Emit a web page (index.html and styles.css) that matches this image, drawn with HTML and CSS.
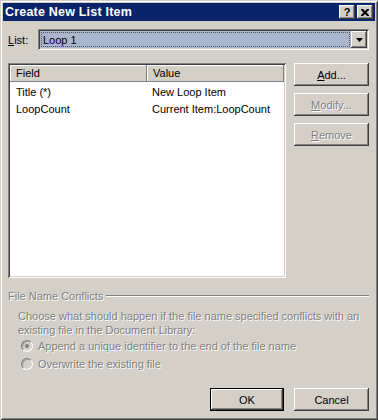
FILE: index.html
```html
<!DOCTYPE html>
<html>

<head>
    <title>Create New List Item</title>
    <link rel="stylesheet" href="styles.css">
</head>

<body>
    <div class="window">
        <div class="titlebar">
            <span class="title">Create New List Item</span>
            <div class="caption-buttons">
                <div class="caption-btn help">?</div>
                <div class="caption-btn">
                    <svg width="8" height="7" viewBox="0 0 8 7">
                        <path d="M0 0h2l2 2 2-2h2v1l-2.5 2.5 2.5 2.5v1h-2l-2-2-2 2h-2v-1l2.5-2.5-2.5-2.5z" fill="#000"/>
                    </svg>
                </div>
            </div>
        </div>

        <div class="content">
            <div class="list-row">
                <span class="list-label"><u>L</u>ist:</span>
                <div class="combo">
                    <div class="combo-value"><span>Loop 1</span></div>
                    <div class="combo-btn">
                        <svg width="7" height="4" viewBox="0 0 7 4"><path d="M0 0h7l-3.5 4z" fill="#000"/></svg>
                    </div>
                </div>
            </div>

            <div class="main">
                <div class="listview">
                    <div class="lv-header">
                        <div class="lv-col field">Field</div>
                        <div class="lv-col value">Value</div>
                    </div>
                    <div class="lv-row">
                        <div class="lv-cell field">Title (*)</div>
                        <div class="lv-cell value">New Loop Item</div>
                    </div>
                    <div class="lv-row">
                        <div class="lv-cell field">LoopCount</div>
                        <div class="lv-cell value">Current Item:LoopCount</div>
                    </div>
                </div>
                <div class="side-buttons">
                    <div class="btn"><span><u>A</u>dd...</span></div>
                    <div class="btn disabled"><span><u>M</u>odify...</span></div>
                    <div class="btn disabled"><span><u>R</u>emove</span></div>
                </div>
            </div>

            <div class="group">
                <div class="group-title">
                    <span>File Name Conflicts</span>
                    <div class="group-line"></div>
                </div>
                <p class="group-desc">Choose what should happen if the file name specified conflicts with an existing file in the Document Library:</p>
                <div class="radio-row">
                    <span class="radio checked"></span>
                    <span>Append a unique identifier to the end of the file name</span>
                </div>
                <div class="radio-row">
                    <span class="radio"></span>
                    <span>Overwrite the existing file</span>
                </div>
            </div>

            <div class="footer">
                <div class="btn default"><span>OK</span></div>
                <div class="btn"><span>Cancel</span></div>
            </div>
        </div>
    </div>
</body>

</html>
```

FILE: styles.css
```css
/* Windows classic dialog */
body {
    margin: 0;
    background-color: #d4d0c8;
    font-family: 'Liberation Sans', Arial, sans-serif;
    font-size: 11px;
    color: #000;
}

.window {
    width: 378px;
    height: 420px;
    box-sizing: border-box;
    padding: 3px;
    background-color: #d4d0c8;
    box-shadow: inset 1px 1px 0 #d4d0c8, inset -1px -1px 0 #404040,
        inset 2px 2px 0 #fff, inset -2px -2px 0 #808080;
}

.titlebar {
    height: 18px;
    background-color: #0a246a;
    display: flex;
    align-items: center;
    justify-content: space-between;
    padding: 0 2px 0 2px;
}

.title {
    color: #fff;
    font-weight: bold;
    font-size: 12.5px;
    letter-spacing: 0.2px;
}

.caption-buttons {
    display: flex;
    gap: 2px;
}

.caption-btn {
    width: 16px;
    height: 14px;
    box-sizing: border-box;
    background-color: #d4d0c8;
    box-shadow: inset -1px -1px 0 #404040, inset 1px 1px 0 #fff,
        inset -2px -2px 0 #808080;
    display: flex;
    align-items: center;
    justify-content: center;
}

.caption-btn.help {
    font-weight: bold;
    font-size: 11px;
    line-height: 14px;
}

.content {
    padding: 0 6px 0 5px;
}

.list-row {
    display: flex;
    align-items: center;
    margin-top: 8px;
    height: 21px;
}

.list-label {
    width: 30px;
}

.combo {
    flex: 1;
    height: 21px;
    box-sizing: border-box;
    background-color: #a9b6cd;
    display: flex;
    padding: 2px;
    box-shadow: inset 1px 1px 0 #808080, inset -1px -1px 0 #fff,
        inset 2px 2px 0 #404040, inset -2px -2px 0 #d4d0c8;
}

.combo-value {
    flex: 1;
    margin: 1px;
    border: 1px dotted #555;
    display: flex;
    align-items: center;
    padding-left: 1px;
}

.combo-btn {
    width: 16px;
    background-color: #d4d0c8;
    box-shadow: inset -1px -1px 0 #404040, inset 1px 1px 0 #fff,
        inset -2px -2px 0 #808080;
    display: flex;
    align-items: center;
    justify-content: center;
}

.main {
    display: flex;
    margin-top: 13px;
    height: 215px;
    gap: 8px;
}

.listview {
    width: 278px;
    box-sizing: border-box;
    background-color: #fff;
    padding: 2px;
    box-shadow: inset 1px 1px 0 #808080, inset -1px -1px 0 #fff,
        inset 2px 2px 0 #404040, inset -2px -2px 0 #d4d0c8;
}

.lv-header {
    display: flex;
    height: 17px;
    margin-bottom: 2px;
}

.lv-col {
    background-color: #d4d0c8;
    box-shadow: inset -1px -1px 0 #808080, inset 1px 1px 0 #fff;
    padding-left: 6px;
    line-height: 17px;
    box-sizing: border-box;
}

.lv-col.field {
    width: 137px;
}

.lv-col.value {
    flex: 1;
}

.lv-row {
    display: flex;
    height: 17px;
    line-height: 17px;
}

.lv-cell.field {
    width: 137px;
    padding-left: 6px;
    box-sizing: border-box;
}

.lv-cell.value {
    padding-left: 5px;
}

.side-buttons {
    display: flex;
    flex-direction: column;
    gap: 7px;
}

.btn {
    width: 75px;
    height: 23px;
    box-sizing: border-box;
    background-color: #d4d0c8;
    box-shadow: inset -1px -1px 0 #404040, inset 1px 1px 0 #fff,
        inset -2px -2px 0 #808080;
    display: flex;
    align-items: center;
    justify-content: center;
}

.btn.disabled {
    color: #808080;
    text-shadow: 1px 1px 0 #fff;
}

.btn.default {
    width: 74px;
    box-shadow: inset 0 0 0 1px #000, inset -2px -2px 0 #404040,
        inset 2px 2px 0 #fff, inset -3px -3px 0 #808080;
}

.group {
    margin-top: 11px;
    color: #808080;
    text-shadow: 1px 1px 0 #fff;
}

.group-title {
    display: flex;
    align-items: center;
    height: 13px;
}

.group-line {
    flex: 1;
    margin-left: 3px;
    border-top: 1px solid #808080;
    border-bottom: 1px solid #fff;
    box-sizing: border-box;
    height: 2px;
}

.group-desc {
    margin: 7px 0 0 10px;
    line-height: 14px;
    width: 350px;
}

.radio-row {
    display: flex;
    align-items: center;
    height: 18px;
    padding-left: 13px;
    gap: 5px;
}

.radio-row:first-of-type {
    margin-top: 1px;
}

.radio {
    width: 12px;
    height: 12px;
    box-sizing: border-box;
    border-radius: 50%;
    border: 1px solid;
    border-color: #808080 #fff #fff #808080;
    background-color: #d4d0c8;
    box-shadow: inset 1px 1px 0 #a0a0a0;
    display: flex;
    align-items: center;
    justify-content: center;
    text-shadow: none;
}

.radio.checked::after {
    content: "";
    width: 4px;
    height: 4px;
    border-radius: 50%;
    background-color: #808080;
}

.footer {
    display: flex;
    justify-content: flex-end;
    gap: 10px;
    margin-top: 15px;
}
```
